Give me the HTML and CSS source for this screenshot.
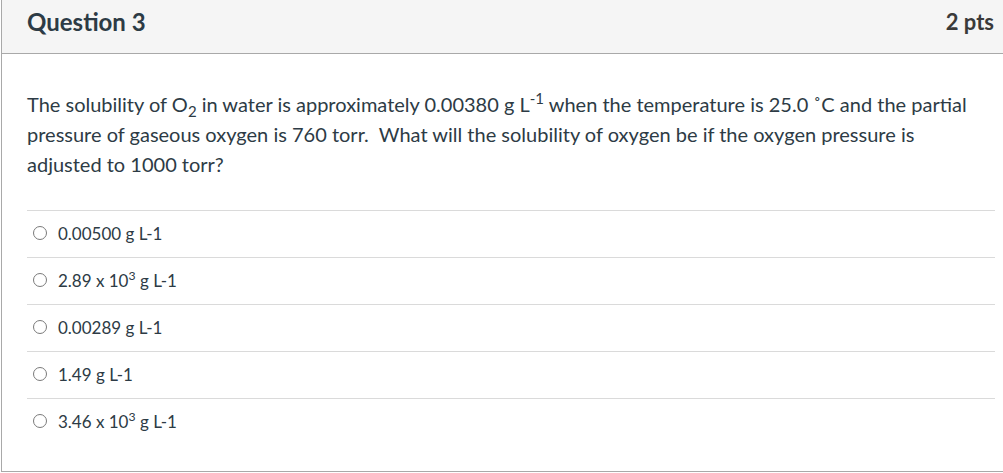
FILE: index.html
```html
<!DOCTYPE html>
<html>
<head>
<meta charset="utf-8">
<link rel="stylesheet" href="styles.css">
</head>
<body>
<div class="question">
  <div class="header">
    <span class="title">Question 3</span>
    <span class="pts">2 pts</span>
  </div>
  <div class="content">
    <p class="text">The solubility of O<sub>2</sub> in water is approximately 0.00380 g L<sup>-1</sup> when the temperature is 25.0 ˚C and the partial pressure of gaseous oxygen is 760 torr.&nbsp; What will the solubility of oxygen be if the oxygen pressure is adjusted to 1000 torr?</p>
    <div class="answers">
      <label class="answer"><span class="radio"></span><span>0.00500 g L-1</span></label>
      <label class="answer"><span class="radio"></span><span>2.89 x 10<sup>3</sup> g L-1</span></label>
      <label class="answer"><span class="radio"></span><span>0.00289 g L-1</span></label>
      <label class="answer"><span class="radio"></span><span>1.49 g L-1</span></label>
      <label class="answer"><span class="radio"></span><span>3.46 x 10<sup>3</sup> g L-1</span></label>
    </div>
  </div>
</div>
</body>
</html>
```
FILE: styles.css
```css
html, body {
  margin: 0;
  padding: 0;
  background: #fff;
  overflow: hidden;
}
body {
  font-family: Lato, "Liberation Sans", sans-serif;
  color: #2d3b45;
}
.question {
  margin-left: 1px;
  border-left: 1px solid #a9a9a9;
  border-bottom: 1px solid #a9a9a9;
  height: 472px;
  box-sizing: border-box;
}
.header {
  height: 54px;
  box-sizing: border-box;
  background: #f5f5f5;
  border-bottom: 1px solid #a9a9a9;
  display: flex;
  justify-content: space-between;
  align-items: flex-start;
  padding: 10px 9px 0 25px;
  line-height: 24px;
}
.title {
  font-weight: 700;
  font-size: 24px;
}
.pts {
  font-weight: 700;
  font-size: 22px;
  color: #3a3a3a;
}
.content {
  padding: 0 8px 0 25px;
}
.text {
  margin: 0;
  padding: 35px 20px 0 0;
  font-size: 20px;
  line-height: 30px;
  height: 120px;
  box-sizing: border-box;
}
.text sub, .text sup {
  font-size: 75%;
  line-height: 0;
}
.answer sup {
  font-size: 72%;
  line-height: 0;
}
.answers {
  margin-top: 36px;
}
.answer {
  display: flex;
  align-items: center;
  gap: 11px;
  height: 47px;
  border-top: 1px solid #dadada;
  box-sizing: border-box;
  padding-left: 6px;
  padding-bottom: 2px;
  font-size: 17px;
}
.radio {
  width: 12px;
  height: 12px;
  border: 1px solid #7a7a7a;
  border-radius: 50%;
  flex: none;
}
```
